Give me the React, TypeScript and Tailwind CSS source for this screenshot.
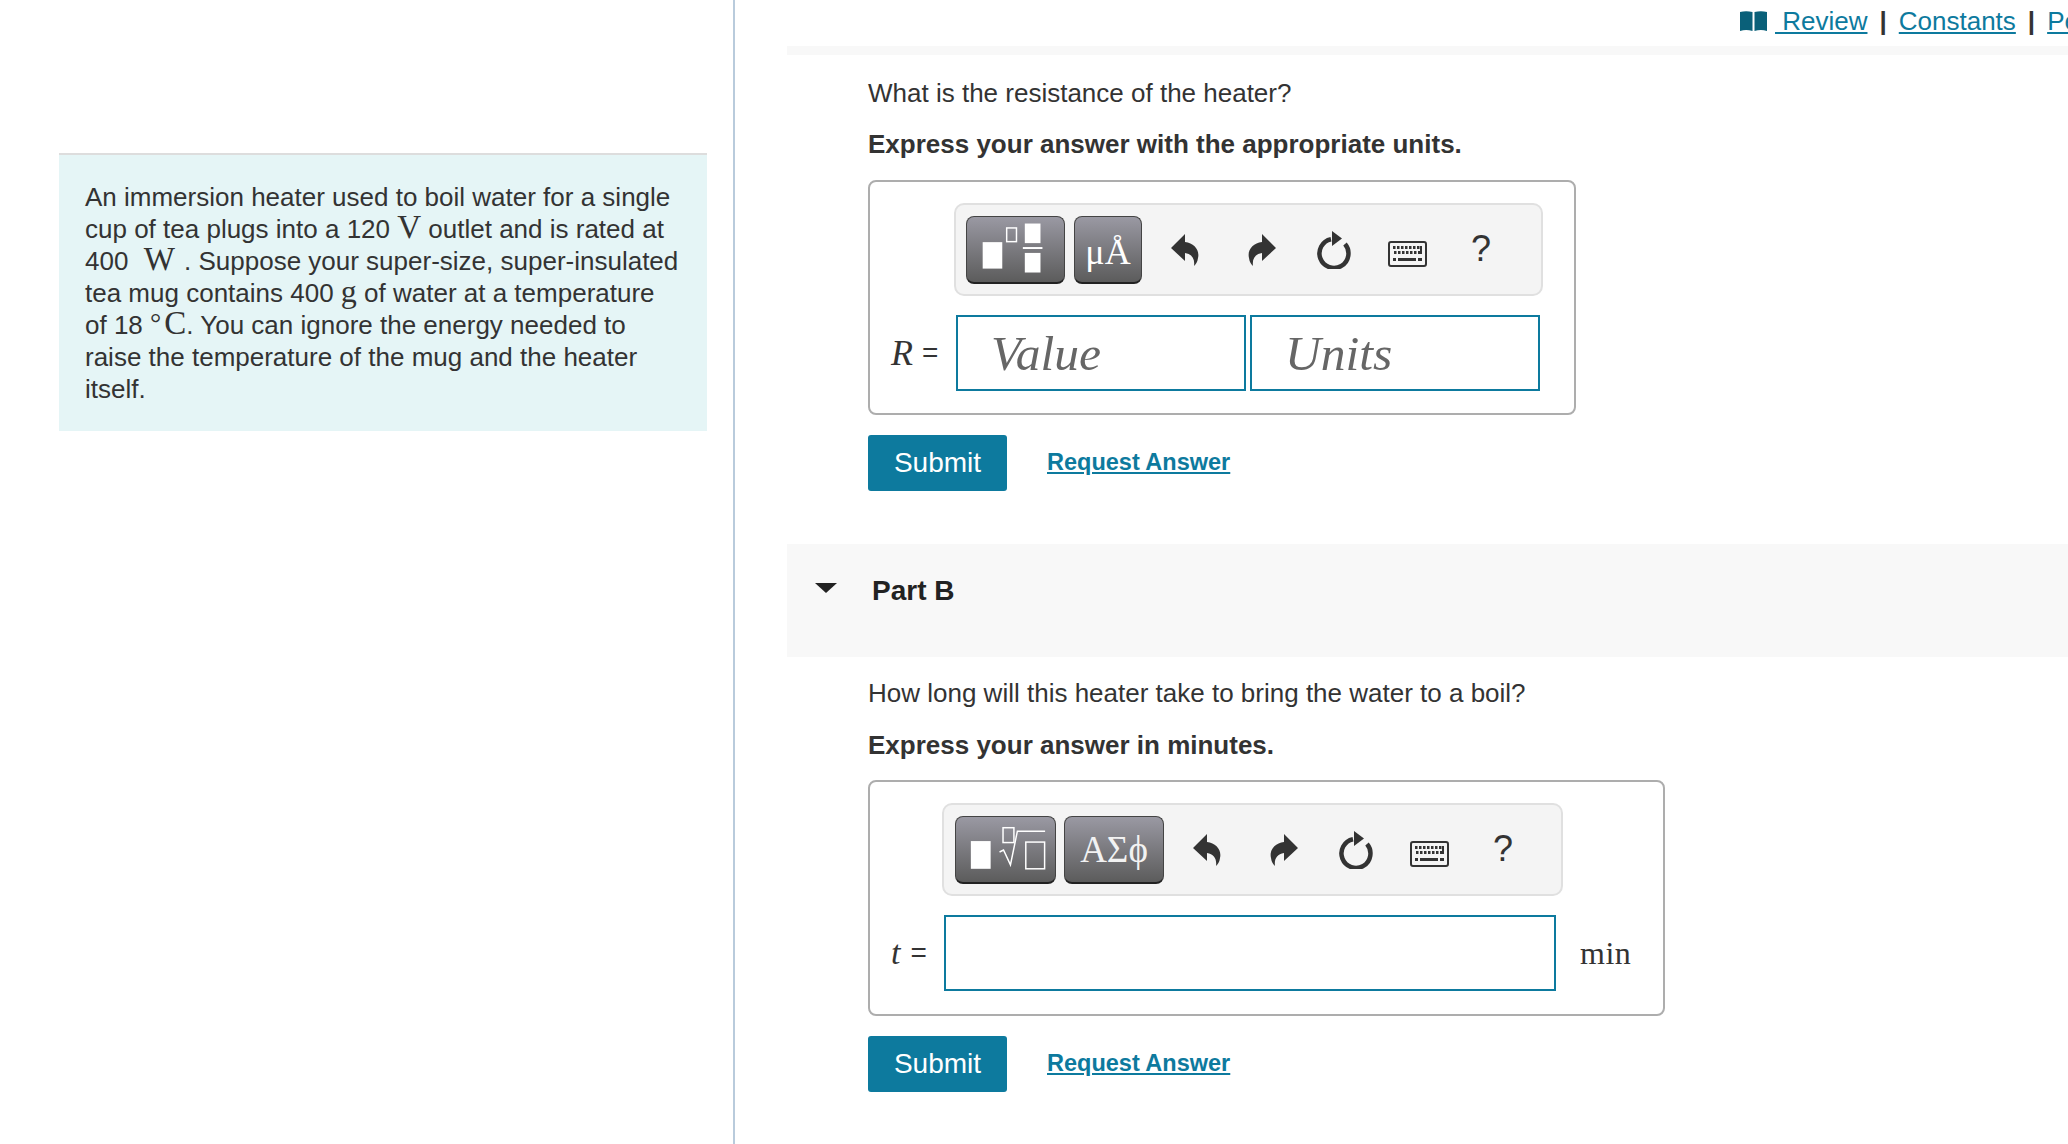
const BookIcon = () => (
  <svg width="27" height="20" viewBox="0 0 27 20" className="shrink-0">
    <path d="M0 1 Q6 -0.5 12.5 1 V20 Q6 18 0 20 Z" fill="#0a6079" />
    <path d="M14.5 1 Q21 -0.5 27 1 V20 Q21 18 14.5 20 Z" fill="#0a6079" />
  </svg>
);

const UndoIcon = ({ flip }: { flip?: boolean }) => (
  <svg width="28" height="33" viewBox="0 0 28 33" className={flip ? '-scale-x-100' : ''}>
    <path d="M0 15 L14 1 V9 C23 10 29 17 27 25 C26.5 29 25 31 23 33 C24 26 21 21 14 20 V28 Z" fill="#333" />
  </svg>
);

const RefreshIcon = () => (
  <svg width="34" height="38" viewBox="0 0 34 38">
    <path d="M14 8.2 A14.5 14.5 0 1 0 28 13" fill="none" stroke="#333" strokeWidth="4.5" />
    <path d="M15 0 L25 7.5 L15 15 Z" fill="#333" />
  </svg>
);

const KeyboardIcon = () => {
  const top = [5, 9, 13, 17, 21, 25, 29];
  return (
    <svg width="39" height="26" viewBox="0 0 39 26">
      <rect x="1" y="1" width="37" height="24" rx="2" fill="#f4f4f4" stroke="#333" strokeWidth="2" />
      {top.map((x) => (
        <rect key={x} x={x} y="5" width="2.5" height="3" fill="#333" />
      ))}
      {top.map((x) => (
        <rect key={x} x={x + 1} y="10" width="2.5" height="3" fill="#333" />
      ))}
      <rect x="32" y="5" width="2" height="8" fill="#333" />
      <rect x="5" y="17" width="3" height="3" fill="#333" />
      <rect x="10" y="17" width="18" height="3" fill="#333" />
      <rect x="30" y="17" width="4" height="3" fill="#333" />
    </svg>
  );
};

const FractionGlyph = () => (
  <svg width="99" height="68" viewBox="0 0 99 68">
    <rect x="16" y="27" width="20" height="27" fill="#fff" />
    <rect x="40.5" y="12.5" width="10" height="14" fill="none" stroke="#fff" strokeWidth="1.5" />
    <rect x="59" y="8" width="16" height="20" fill="#fff" />
    <rect x="57" y="32" width="20" height="2" fill="#fff" />
    <rect x="59" y="38" width="16" height="20" fill="#fff" />
  </svg>
);

const RootGlyph = () => (
  <svg width="100" height="68" viewBox="0 0 100 68">
    <rect x="15" y="26" width="20" height="28" fill="#fff" />
    <rect x="47.5" y="12.5" width="11" height="15" fill="none" stroke="#fff" strokeWidth="1.5" />
    <path d="M44 37 L48 35 L55 50 L62 16 H90" fill="none" stroke="#fff" strokeWidth="1.5" />
    <rect x="70.5" y="27" width="19" height="27" fill="none" stroke="#fff" strokeWidth="1.5" />
  </svg>
);

const GlyphButton = ({ children, width }: { children: React.ReactNode; width: string }) => (
  <div className={`flex h-[68px] ${width} shrink-0 items-center justify-center overflow-hidden rounded-[8px] border border-b-2 border-[#444] border-b-[#222] bg-gradient-to-b from-[#9a99a3] to-[#5c5c5c]`}>
    {children}
  </div>
);

const Toolbar = ({ first, second, className }: { first: React.ReactNode; second: React.ReactNode; className: string }) => (
  <div className={`flex h-[93px] items-center rounded-[10px] border-2 border-[#e0e0e0] bg-[#f4f4f4] ${className}`}>
    {first}
    {second}
    <div className="ml-[29px] flex w-[28px] justify-center"><UndoIcon /></div>
    <div className="ml-[49px] flex w-[28px] justify-center"><UndoIcon flip /></div>
    <div className="ml-[41px] flex w-[34px] justify-center"><RefreshIcon /></div>
    <div className="ml-[37px] flex w-[39px] translate-y-[4px] justify-center"><KeyboardIcon /></div>
    <span className="ml-[44px] -translate-y-[1px] text-[36px] leading-none text-[#333]">?</span>
  </div>
);

const SubmitRow = () => (
  <div className="mt-[20px] flex items-center">
    <button className="h-[56px] w-[139px] rounded-[3px] bg-[#0d7a9e] text-[28px] text-white">Submit</button>
    <a className="ml-[40px] text-[23.5px] font-bold text-[#0d7a9e] underline">Request Answer</a>
  </div>
);

const mathFont = "font-['Liberation_Serif',serif] leading-none";
const inlineMath = "font-['Liberation_Serif',serif] leading-[0]";
const answerInput = "h-[76px] border-2 border-[#0d7a9e] bg-white pl-[33px] font-['Liberation_Serif',serif] text-[49.5px] italic outline-none placeholder:text-[#666]";

export default function App() {
  return (
    <div className="flex h-[1144px] w-[2068px] overflow-hidden bg-white font-['Liberation_Sans',sans-serif] text-[#333]">
      {/* problem statement */}
      <div className="h-full w-[735px] shrink-0 border-r-2 border-[#b9cbdc] pl-[59px] pt-[153px]">
        <div className="h-[278px] w-[648px] border-t-2 border-[#ddd] bg-[#e5f5f6] px-[26px] pt-[26px] text-[26px] leading-[32px]">
          <p>
            An immersion heater used to boil water for a single cup of tea plugs into a 120{' '}
            <span className={`${inlineMath} text-[33px]`}>V</span> outlet and is rated at 400{' '}
            <span className={`${inlineMath} mx-[2px] ml-[8px] text-[33px]`}>W</span> . Suppose your super-size, super-insulated
            tea mug contains 400 <span className={`${inlineMath} text-[32px]`}>g</span> of water at a temperature of 18{' '}
            <span className={`${inlineMath} mr-[3px] align-[2px] text-[28px]`}>°</span>
            <span className={`${inlineMath} text-[33px]`}>C</span>. You can ignore the energy needed to raise the
            temperature of the mug and the heater itself.
          </p>
        </div>
      </div>

      {/* question parts */}
      <div className="min-w-0 flex-1 overflow-hidden">
        <div className="flex h-[46px] items-center whitespace-nowrap pb-[4px] pl-[1005px] text-[26px] leading-none text-[#333]">
          <BookIcon />
          <a className="ml-[8px] whitespace-pre text-[#0d7a9e] underline"> Review</a>
          <span className="mx-[12px] font-bold">|</span>
          <a className="text-[#0d7a9e] underline">Constants</a>
          <span className="mx-[12px] font-bold">|</span>
          <a className="text-[#0d7a9e] underline">Periodic Table</a>
        </div>
        <div className="ml-[52px] h-[9px] bg-[#f8f8f8]" />

        <div className="pl-[133px]">
          <p className="mt-[22px] text-[26px] leading-[32px]">What is the resistance of the heater?</p>
          <p className="mt-[19px] text-[26px] font-bold leading-[32px]">Express your answer with the appropriate units.</p>
          <div className="mt-[20px] h-[235px] w-[708px] rounded-[8px] border-2 border-[#adadad] pt-[21px]">
            <Toolbar
              className="ml-[84px] w-[589px] pl-[10px]"
              first={<GlyphButton width="w-[99px]"><FractionGlyph /></GlyphButton>}
              second={
                <div className="ml-[9px]">
                  <GlyphButton width="w-[68px]">
                    <span className={`${mathFont} mt-[6px] text-[36px] text-white`}>μÅ</span>
                  </GlyphButton>
                </div>
              }
            />
            <div className="mt-[19px] flex items-center">
              <span className={`${mathFont} ml-[21px] flex w-[65px] items-center gap-[9px] text-[36px]`}>
                <i>R</i>
                <span className="font-['Liberation_Sans',sans-serif] text-[28px]">=</span>
              </span>
              <input readOnly placeholder="Value" className={`${answerInput} w-[290px]`} />
              <input readOnly placeholder="Units" className={`${answerInput} ml-[4px] w-[290px]`} />
            </div>
          </div>
          <SubmitRow />
        </div>

        <div className="ml-[52px] mt-[53px] flex h-[113px] items-start bg-[#f8f8f8]">
          <div className="ml-[28px] mt-[39px] h-0 w-0 border-x-[11px] border-t-[10px] border-x-transparent border-t-[#222]" />
          <h2 className="ml-[35px] mt-[31px] text-[28px] font-bold leading-[32px] text-[#222]">Part B</h2>
        </div>

        <div className="pl-[133px]">
          <p className="mt-[20px] text-[26px] leading-[32px]">How long will this heater take to bring the water to a boil?</p>
          <p className="mt-[20px] text-[26px] font-bold leading-[32px]">Express your answer in minutes.</p>
          <div className="mt-[19px] h-[236px] w-[797px] rounded-[8px] border-2 border-[#adadad] pt-[21px]">
            <Toolbar
              className="ml-[72px] w-[621px] pl-[11px]"
              first={<GlyphButton width="w-[101px]"><RootGlyph /></GlyphButton>}
              second={
                <div className="ml-[8px]">
                  <GlyphButton width="w-[100px]">
                    <span className={`${mathFont} text-[37px] text-[#f2f2f2]`}>ΑΣϕ</span>
                  </GlyphButton>
                </div>
              }
            />
            <div className="mt-[19px] flex items-center">
              <span className={`${mathFont} ml-[21px] flex w-[53px] items-center gap-[10px] text-[34px]`}>
                <i>t</i>
                <span className="font-['Liberation_Sans',sans-serif] text-[28px]">=</span>
              </span>
              <input readOnly className={`${answerInput} w-[612px]`} />
              <span className={`${mathFont} ml-[24px] text-[32px] tracking-[0.5px]`}>min</span>
            </div>
          </div>
          <SubmitRow />
        </div>
      </div>
    </div>
  );
}
